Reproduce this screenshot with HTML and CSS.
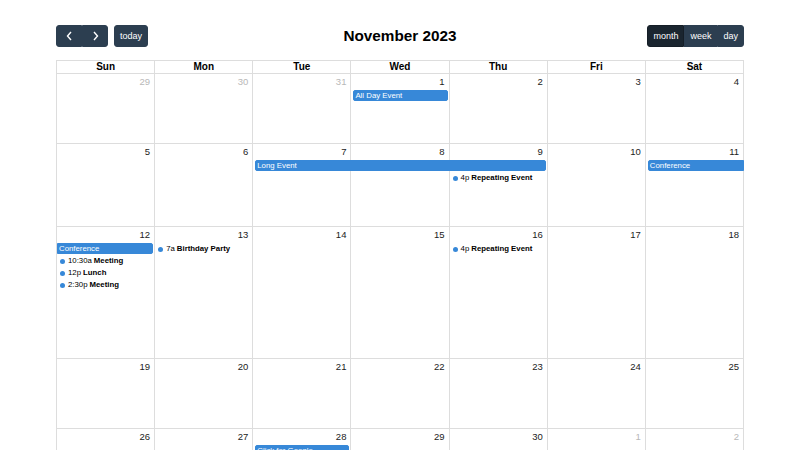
FILE: index.html
```html
<!DOCTYPE html>
<html>
<head>
<meta charset="utf-8">
<link rel="stylesheet" href="styles.css">
</head>
<body>
<div class="calendar">
  <div class="toolbar">
    <div class="tb-left">
      <div class="btn-group">
        <button class="btn btn-icon" aria-label="prev"><svg width="7" height="10" viewBox="0 0 7 10"><polyline points="5,1 1.5,5 5,9" fill="none" stroke="#fff" stroke-width="1.4"/></svg></button>
        <button class="btn btn-icon" aria-label="next"><svg width="7" height="10" viewBox="0 0 7 10"><polyline points="2,1 5.5,5 2,9" fill="none" stroke="#fff" stroke-width="1.4"/></svg></button>
      </div>
      <button class="btn btn-today">today</button>
    </div>
    <h2 class="title">November 2023</h2>
    <div class="tb-right">
      <div class="btn-group">
        <button class="btn active">month</button>
        <button class="btn">week</button>
        <button class="btn">day</button>
      </div>
    </div>
  </div>

  <div class="grid">
    <div class="head">
      <div class="th">Sun</div><div class="th">Mon</div><div class="th">Tue</div><div class="th">Wed</div><div class="th">Thu</div><div class="th">Fri</div><div class="th">Sat</div>
    </div>

    <div class="week w1">
      <div class="cell c1"></div><div class="cell c2"></div><div class="cell c3"></div><div class="cell c4"></div><div class="cell c5"></div><div class="cell c6"></div><div class="cell c7"></div>
      <div class="num c1 other">29</div><div class="num c2 other">30</div><div class="num c3 other">31</div><div class="num c4">1</div><div class="num c5">2</div><div class="num c6">3</div><div class="num c7">4</div>
      <div class="bar l1 c4">All Day Event</div>
    </div>

    <div class="week w2">
      <div class="cell c1"></div><div class="cell c2"></div><div class="cell c3"></div><div class="cell c4"></div><div class="cell c5"></div><div class="cell c6"></div><div class="cell c7"></div>
      <div class="num c1">5</div><div class="num c2">6</div><div class="num c3">7</div><div class="num c4">8</div><div class="num c5">9</div><div class="num c6">10</div><div class="num c7">11</div>
      <div class="bar l1 span-3-5">Long Event</div>
      <div class="dot-ev l2 c5"><span class="dot"></span>4p <b>Repeating Event</b></div>
      <div class="bar l1 c7 cont-right">Conference</div>
    </div>

    <div class="week w3">
      <div class="cell c1"></div><div class="cell c2"></div><div class="cell c3"></div><div class="cell c4"></div><div class="cell c5"></div><div class="cell c6"></div><div class="cell c7"></div>
      <div class="num c1">12</div><div class="num c2">13</div><div class="num c3">14</div><div class="num c4">15</div><div class="num c5">16</div><div class="num c6">17</div><div class="num c7">18</div>
      <div class="bar l1 c1 cont-left">Conference</div>
      <div class="dot-ev l2 c1"><span class="dot"></span>10:30a <b>Meeting</b></div>
      <div class="dot-ev l3 c1"><span class="dot"></span>12p <b>Lunch</b></div>
      <div class="dot-ev l4 c1"><span class="dot"></span>2:30p <b>Meeting</b></div>
      <div class="dot-ev l1 c2"><span class="dot"></span>7a <b>Birthday Party</b></div>
      <div class="dot-ev l1 c5"><span class="dot"></span>4p <b>Repeating Event</b></div>
    </div>

    <div class="week w4">
      <div class="cell c1"></div><div class="cell c2"></div><div class="cell c3"></div><div class="cell c4"></div><div class="cell c5"></div><div class="cell c6"></div><div class="cell c7"></div>
      <div class="num c1">19</div><div class="num c2">20</div><div class="num c3">21</div><div class="num c4">22</div><div class="num c5">23</div><div class="num c6">24</div><div class="num c7">25</div>
    </div>

    <div class="week w5">
      <div class="cell c1"></div><div class="cell c2"></div><div class="cell c3"></div><div class="cell c4"></div><div class="cell c5"></div><div class="cell c6"></div><div class="cell c7"></div>
      <div class="num c1">26</div><div class="num c2">27</div><div class="num c3">28</div><div class="num c4">29</div><div class="num c5">30</div><div class="num c6 other">1</div><div class="num c7 other">2</div>
      <div class="bar l1 c3">Click for Google</div>
    </div>
  </div>
</div>
</body>
</html>
```

FILE: styles.css
```css
html, body {
  margin: 0;
  padding: 0;
  background: #fff;
}
body {
  font-family: "Liberation Sans", Arial, sans-serif;
  font-size: 9px;
  color: #000;
}
.calendar {
  padding: 25px 56px 0 56px;
}
.toolbar {
  display: flex;
  align-items: center;
  justify-content: space-between;
  margin-bottom: 13px;
  height: 22px;
}
.tb-left, .tb-right {
  display: flex;
  align-items: center;
  gap: 6px;
  width: 200px;
}
.tb-right {
  justify-content: flex-end;
}
.title {
  margin: 0;
  font-size: 15.3px;
  font-weight: bold;
  line-height: 22px;
}
.btn-group {
  display: flex;
}
.btn {
  font-family: "Liberation Sans", Arial, sans-serif;
  font-size: 9px;
  line-height: 20px;
  height: 22px;
  padding: 0 5px;
  border: 1px solid #2c3e50;
  background: #2c3e50;
  color: #fff;
  border-radius: 3px;
  margin: 0;
  cursor: pointer;
  display: flex;
  align-items: center;
  justify-content: center;
}
.btn-group .btn {
  border-radius: 0;
}
.btn-group .btn:first-child {
  border-radius: 3px 0 0 3px;
}
.btn-group .btn:last-child {
  border-radius: 0 3px 3px 0;
}
.btn-icon {
  width: 26px;
  padding: 0;
}
.btn.active {
  background: #1a252f;
  border-color: #151e27;
}

.grid {
  border-left: 1px solid #ddd;
  border-top: 1px solid #ddd;
}
.head {
  display: grid;
  grid-template-columns: repeat(7, 1fr);
}
.th {
  border-right: 1px solid #ddd;
  border-bottom: 1px solid #ddd;
  text-align: center;
  font-weight: bold;
  font-size: 10px;
  line-height: 12px;
  height: 12px;
}
.week {
  display: grid;
  grid-template-columns: repeat(7, 1fr);
  grid-template-rows: 16px 12px 12px 12px 12px 1fr;
  overflow: hidden;
}
.w1 { height: 70px; }
.w2 { height: 83px; }
.w3 { height: 132px; }
.w4 { height: 70px; }
.w5 { height: 70px; }

.cell {
  grid-row: 1 / -1;
  border-right: 1px solid #ddd;
  border-bottom: 1px solid #ddd;
}
.c1 { grid-column: 1; }
.c2 { grid-column: 2; }
.c3 { grid-column: 3; }
.c4 { grid-column: 4; }
.c5 { grid-column: 5; }
.c6 { grid-column: 6; }
.c7 { grid-column: 7; }
.span-3-5 { grid-column: 3 / 6; }

.num {
  grid-row: 1;
  text-align: right;
  padding: 1px 5px 0 0;
  line-height: 13px;
  font-size: 9.5px;
  color: #222;
}
.num.other {
  color: #b8b8b8;
}
.l1 { grid-row: 2; }
.l2 { grid-row: 3; }
.l3 { grid-row: 4; }
.l4 { grid-row: 5; }

.bar {
  margin: 0 2px 1px 2px;
  background: #3788d8;
  border: 1px solid #3788d8;
  border-radius: 2px;
  color: #fff;
  font-size: 7.8px;
  line-height: 9px;
  padding: 0 1px;
  white-space: nowrap;
  overflow: hidden;
}
.cont-right {
  margin-right: 0;
  border-top-right-radius: 0;
  border-bottom-right-radius: 0;
}
.cont-left {
  margin-left: 0;
  border-top-left-radius: 0;
  border-bottom-left-radius: 0;
}
.dot-ev {
  display: flex;
  align-items: center;
  margin-left: 2px;
  font-size: 7.8px;
  line-height: 12px;
  white-space: nowrap;
  overflow: hidden;
  color: #000;
}
.dot-ev b {
  margin-left: 2px;
}
.dot {
  display: inline-block;
  width: 5px;
  height: 5px;
  border-radius: 50%;
  background: #3788d8;
  margin: 0 3px 0 1px;
}
```
